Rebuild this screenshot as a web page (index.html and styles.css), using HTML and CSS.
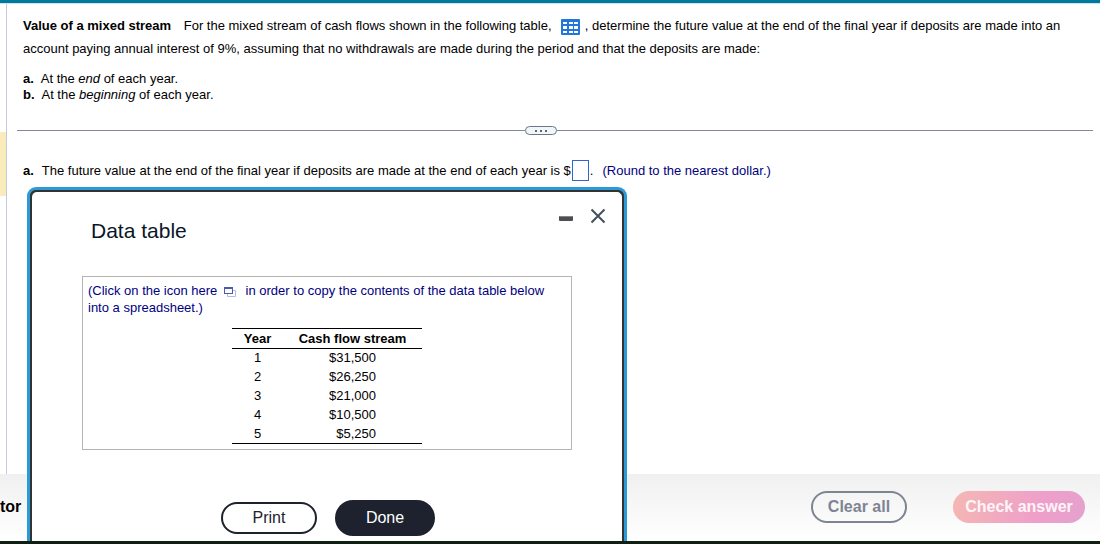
FILE: index.html
```html
<!DOCTYPE html>
<html lang="en">
<head>
  <meta charset="UTF-8" />
  <meta name="viewport" content="width=device-width, initial-scale=1" />
  <title>Value of a mixed stream</title>
  <link rel="stylesheet" href="styles.css">
</head>
<body>

  <div class="workspace">
    <aside class="side-rail">
      <div class="side-marker"></div>
    </aside>

    <main class="content">
      <section class="question">
        <p class="question-text">
          <strong class="question-title">Value of a mixed stream</strong>
          <span>For the mixed stream of cash flows shown in the following table,</span>
          <button class="table-button" type="button" aria-label="Data table">
            <svg width="19" height="16" viewBox="0 0 19 16">
              <rect width="19" height="16" rx="1" fill="#2376d9" />
              <path d="M2 3h4v2H2zM8 3h4v2H8zM13 3h4v2h-4zM2 7h4v3H2zM8 7h4v3H8zM13 7h4v3h-4zM2 12h4v2H2zM8 12h4v2H8zM13 12h4v2h-4z" fill="#fff" />
            </svg>
          </button>
          , determine the future value at the end of the final year if deposits are made into an account paying annual interest of 9%, assuming that no withdrawals are made during the period and that the deposits are made:
        </p>
        <p class="part"><b>a.</b> At the <em>end</em> of each year.</p>
        <p class="part"><b>b.</b> At the <em>beginning</em> of each year.</p>
      </section>

      <div class="divider">
        <button class="divider-handle" type="button" aria-label="Resize">
          <span></span><span></span><span></span>
        </button>
      </div>

      <section class="answer">
        <b>a.</b>
        <label for="futureValue">The future value at the end of the final year if deposits are made at the end of each year is $</label>
        <input type="text" id="futureValue" class="answer-input" />
        <span>.</span>
        <span class="hint">(Round to the nearest dollar.)</span>
      </section>
    </main>
  </div>

  <footer>
    <a class="tutor-link" href="#">tor</a>
    <div class="footer-buttons">
      <button class="clear-button" type="button">Clear all</button>
      <button class="check-button" type="button">Check answer</button>
    </div>
  </footer>

  <div class="dialog" role="dialog" aria-labelledby="dialogTitle">
    <div class="dialog-body">
      <div class="dialog-controls">
        <button type="button" aria-label="Minimize">
          <svg width="14" height="16" viewBox="0 0 14 16">
            <rect y="8" width="14" height="5" rx="1" fill="#4d4d52" />
            <path d="M1 8.500h12" stroke="#85858a" />
          </svg>
        </button>
        <button type="button" aria-label="Close">
          <svg width="16" height="16" viewBox="0 0 16 16">
            <path d="M1.500 1.500l13 13M14.500 1.500l-13 13" fill="none" stroke="#43505f" stroke-width="2" />
          </svg>
        </button>
      </div>

      <h2 class="dialog-title" id="dialogTitle">Data table</h2>

      <div class="data-box">
        <p class="copy-text">
          <span>(Click on the icon here</span>
          <button class="copy-button" type="button" aria-label="Copy to spreadsheet">
            <svg width="12" height="10" viewBox="0 0 12 10">
              <path d="M3.500 3.500h8v6h-8z" fill="#fff" stroke="#b4bbdd" />
              <path d="M0 0h9v7H0z" fill="#4a5cab" />
              <path d="M1 2h7v4H1z" fill="#fff" />
            </svg>
          </button>
          in order to copy the contents of the data table below into a spreadsheet.)
        </p>
        <table class="data-table">
          <thead>
            <tr><th>Year</th><th>Cash flow stream</th></tr>
          </thead>
          <tbody>
            <tr><td>1</td><td>$31,500</td></tr>
            <tr><td>2</td><td>$26,250</td></tr>
            <tr><td>3</td><td>$21,000</td></tr>
            <tr><td>4</td><td>$10,500</td></tr>
            <tr><td>5</td><td>$5,250</td></tr>
          </tbody>
        </table>
      </div>

      <div class="dialog-buttons">
        <button class="print-button" type="button">Print</button>
        <button class="done-button" type="button">Done</button>
      </div>
    </div>
  </div>

</body>
</html>
```
FILE: styles.css
```css
* {
  box-sizing: border-box;
}

body, h2, p {
  margin: 0;
  padding: 0;
}

body {
  position: relative;
  display: flex;
  flex-direction: column;
  height: 100vh;
  overflow: hidden;
  border-top: 3px solid #007a9c;
  border-bottom: 3px solid #0f1f12;
  font-family: "Liberation Sans", Arial, sans-serif;
  font-size: 13px;
  color: #000;
  background: #fff;
}

button {
  font-family: inherit;
  padding: 0;
  border: none;
  background: none;
  cursor: pointer;
}

svg {
  display: block;
}

.workspace {
  flex: 1;
  display: flex;
  border-top: 1px solid #d3e3ec;
}

/* Left rail */
.side-rail {
  width: 7px;
  padding-top: 128px;
  border-right: 1px solid #c5cade;
}

.side-marker {
  height: 64px;
  background: #f9ebba;
}

/* Question */
.content {
  flex: 1;
  padding: 10px 7px 0 10px;
}

.question {
  padding: 0 6px;
}

.question-text {
  margin-bottom: 11px;
  line-height: 23px;
}

.question-title {
  margin-right: 9px;
}

.table-button {
  margin: 0 1px 0 6px;
  vertical-align: -5px;
}

.part {
  line-height: 16px;
}

.part b {
  margin-right: 4px;
}

.divider {
  display: flex;
  align-items: center;
  margin: 23px 0 25px;
}

.divider::before,
.divider::after {
  content: "";
  flex: 18;
  height: 1px;
  background: #83899a;
}

.divider::after {
  flex: 19;
}

.divider-handle {
  display: flex;
  align-items: center;
  justify-content: center;
  gap: 3px;
  width: 32px;
  height: 9px;
  border: 1px solid #66788a;
  border-radius: 5px;
  background: #f3f6f9;
}

.divider-handle span {
  width: 2px;
  height: 2px;
  background: #5c6675;
}

.answer {
  display: flex;
  align-items: center;
  padding: 0 6px;
}

.answer b {
  margin-right: 8px;
}

.answer-input {
  width: 17px;
  height: 21px;
  margin: 0 1px;
  padding: 0;
  border: 1px solid #2f66cc;
}

.hint {
  margin-left: 9px;
  color: #00007f;
}

/* Footer */
footer {
  display: flex;
  align-items: center;
  justify-content: space-between;
  height: 67px;
  padding: 0 15px 2px 0;
  background: linear-gradient(#f0f0f0, #fff);
}

.tutor-link {
  font-size: 16px;
  font-weight: bold;
  color: #000;
  text-decoration: none;
}

.footer-buttons {
  display: flex;
  gap: 46px;
}

.clear-button,
.check-button {
  height: 32px;
  border-radius: 16px;
  font-size: 16px;
  font-weight: bold;
}

.clear-button {
  width: 96px;
  border: 2px solid #7f8493;
  color: #7f8493;
}

.check-button {
  width: 132px;
  color: #fff5f8;
  background: linear-gradient(110deg, #f5b8b2, #ee9fca 65%, #e3a2cd);
}

/* Data table dialog */
.dialog {
  position: absolute;
  top: 184px;
  left: 27px;
  width: 600px;
  max-width: 100%;
  border: 3px solid #2a9bd6;
  border-bottom: none;
  border-radius: 9px 9px 0 0;
  background: #333;
}

.dialog-body {
  padding: 16px 50px 6px;
  border: 2px solid #333;
  border-bottom: none;
  border-radius: 7px 7px 0 0;
  background: #fff;
}

.dialog-controls {
  display: flex;
  justify-content: flex-end;
  gap: 17px;
  margin: 0 -34px -4px 0;
}

.dialog-title {
  padding-left: 9px;
  margin-bottom: 34px;
  font-size: 21px;
  font-weight: normal;
  line-height: 22px;
  color: #0a1628;
}

.data-box {
  padding: 5px;
  border: 1px solid #b4b4b4;
}

.copy-text {
  margin-bottom: 12px;
  line-height: 17px;
  color: #00007f;
}

.copy-button {
  margin: 0 6px 0 3px;
  vertical-align: -2px;
}

.data-table {
  width: 190px;
  margin: 0 auto;
  border-collapse: collapse;
  border-bottom: 1px solid #000;
}

.data-table th {
  padding: 1px 0 0;
  line-height: 18px;
  border-top: 1px solid #000;
  border-bottom: 1px solid #000;
}

.data-table th:first-child {
  width: 51px;
}

.data-table td {
  padding: 0 0 1px;
  line-height: 18px;
  text-align: center;
}

.data-table td:last-child {
  padding-right: 46px;
  text-align: right;
}

.data-table tr:last-child td {
  padding-bottom: 0;
}

.dialog-buttons {
  display: flex;
  align-items: center;
  justify-content: center;
  gap: 18px;
  margin-top: 50px;
  padding-left: 2px;
}

.print-button,
.done-button {
  border-radius: 18px;
  font-size: 16px;
}

.print-button {
  width: 96px;
  height: 32px;
  border: 2px solid #1d222e;
  color: #1d222e;
}

.done-button {
  width: 100px;
  height: 36px;
  color: #fff;
  background: #1d222e;
}
```
